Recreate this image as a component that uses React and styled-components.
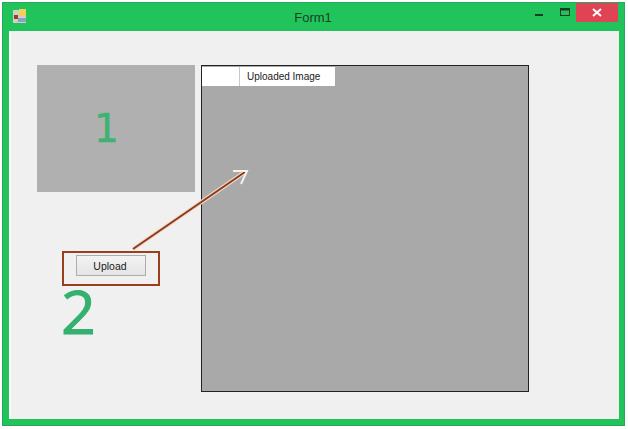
import styled, { createGlobalStyle } from 'styled-components';

const GlobalStyle = createGlobalStyle`
  html, body {
    margin: 0;
    padding: 0;
    background: #fff;
  }
  body {
    font-family: "Liberation Sans", Arial, sans-serif;
  }
`;

const App = () => {
  return (
    <Page>
      <GlobalStyle />
      <Window>
        <TitleBar>
          <AppIcon viewBox="0 0 16 16">
            <rect x="1" y="2" width="13" height="13" fill="#c9d3c4" />
            <rect x="7" y="1" width="7" height="7" fill="#f3cf55" />
            <rect x="2" y="7" width="4" height="4" fill="#a5352f" />
            <rect x="6" y="10" width="8" height="4" fill="#8da0c4" />
          </AppIcon>
          <Title>Form1</Title>
          <WindowControls>
            <MinimizeIcon viewBox="0 0 8 2">
              <rect width="8" height="2" fill="#1c3a25" />
            </MinimizeIcon>
            <MaximizeIcon viewBox="0 0 10 8">
              <rect x="0.5" y="0.5" width="9" height="7" fill="none" stroke="#1c3a25" />
              <rect x="1" y="1" width="8" height="1.5" fill="#1c3a25" />
            </MaximizeIcon>
            <CloseButton>
              <svg width="10" height="9" viewBox="0 0 10 9">
                <path d="M1 1 L9 8 M9 1 L1 8" stroke="#fff" strokeWidth="2" fill="none" />
              </svg>
            </CloseButton>
          </WindowControls>
        </TitleBar>
        <Client>
          <LeftColumn>
            <PictureBox>
              <StepNumber>1</StepNumber>
            </PictureBox>
            <Highlight>
              <UploadButton type="button">Upload</UploadButton>
            </Highlight>
            <BigStepNumber>2</BigStepNumber>
          </LeftColumn>
          <ImagePanel>
            <TabStrip>
              <EmptyTab />
              <TextTab>Uploaded Image</TextTab>
            </TabStrip>
          </ImagePanel>
          <Arrow width="628" height="429" viewBox="0 0 628 429">
            <path d="M133 249 L245 172" stroke="#f6d9c8" strokeWidth="4" fill="none" />
            <path d="M133 249 L245 172" stroke="#8a3b1c" strokeWidth="2" fill="none" />
            <path d="M233 171 L247 171 L241 184" stroke="#f4f1ee" strokeWidth="2" fill="none" />
          </Arrow>
        </Client>
      </Window>
    </Page>
  );
};

const Page = styled.div`
  width: 628px;
  height: 429px;
  padding: 2px 3px 3px 2px;
  box-sizing: border-box;
  overflow: hidden;
`;

const Window = styled.div`
  height: 100%;
  display: flex;
  flex-direction: column;
  background: #20c45a;
  box-shadow: inset 0 0 0 1px #2aa95a;
  padding: 0 6px 7px 7px;
  box-sizing: border-box;
`;

const TitleBar = styled.div`
  height: 29px;
  flex-shrink: 0;
  display: flex;
  align-items: flex-start;
  position: relative;
`;

const AppIcon = styled.svg`
  width: 16px;
  height: 16px;
  margin: 6px 0 0 3px;
`;

const Title = styled.div`
  position: absolute;
  left: 0;
  right: 2px;
  top: 8px;
  text-align: center;
  font-size: 13px;
  line-height: 15px;
  color: #1d3d28;
`;

const WindowControls = styled.div`
  margin-left: auto;
  display: flex;
  align-items: flex-start;
`;

const MinimizeIcon = styled.svg`
  width: 8px;
  height: 2px;
  margin: 12px 17px 0 0;
`;

const MaximizeIcon = styled.svg`
  width: 10px;
  height: 8px;
  margin: 6px 6px 0 0;
`;

const CloseButton = styled.div`
  width: 42px;
  height: 19px;
  margin: 1px 1px 0 0;
  background: #df4354;
  display: flex;
  align-items: center;
  justify-content: center;
`;

const Client = styled.div`
  flex: 1;
  display: flex;
  align-items: flex-start;
  gap: 6px;
  padding: 34px 0 0 26px;
  background: #f0f0f0;
  border-left: 2px solid #fff;
`;

const LeftColumn = styled.div`
  width: 158px;
  display: flex;
  flex-direction: column;
  align-items: flex-start;
`;

const PictureBox = styled.div`
  width: 158px;
  height: 127px;
  background: #b0b0b0;
  display: flex;
  align-items: center;
  justify-content: center;
`;

const StepNumber = styled.div`
  font-family: "DejaVu Sans", sans-serif;
  font-size: 39px;
  line-height: 44px;
  color: #3cb371;
  -webkit-text-stroke: 0.5px #3cb371;
  margin: 1px 19px 0 0;
`;

const Highlight = styled.div`
  width: 98px;
  height: 35px;
  margin: 59px 0 0 25px;
  box-sizing: border-box;
  border: 2px solid #9a3f1e;
  padding: 2px 0 0 12px;
`;

const UploadButton = styled.button`
  display: block;
  width: 70px;
  height: 21px;
  padding: 0 2px 0 0;
  box-sizing: border-box;
  border: 1px solid #adadad;
  background: linear-gradient(#f3f3f3, #e4e4e4);
  font-family: "Liberation Sans", Arial, sans-serif;
  font-size: 10.5px;
  color: #1a1a1a;
`;

const BigStepNumber = styled.div`
  font-family: "Open Sans", sans-serif;
  font-size: 61px;
  line-height: 50px;
  color: #34b070;
  -webkit-text-stroke: 1px #34b070;
  margin: 0 0 0 24px;
`;

const ImagePanel = styled.div`
  width: 328px;
  height: 327px;
  box-sizing: border-box;
  border: 1px solid #222;
  background: #a9a9a9;
  padding: 1px 0 0 0;
`;

const TabStrip = styled.div`
  display: flex;
  height: 19px;
  background: #fff;
  width: 133px;
`;

const EmptyTab = styled.div`
  width: 38px;
  border-right: 1px solid #c8c8c8;
  box-sizing: border-box;
`;

const TextTab = styled.div`
  padding-left: 7px;
  font-size: 10px;
  line-height: 19px;
  color: #1a1a1a;
`;

const Arrow = styled.svg`
  position: absolute;
  left: 0;
  top: 0;
  pointer-events: none;
`;

export default App;
